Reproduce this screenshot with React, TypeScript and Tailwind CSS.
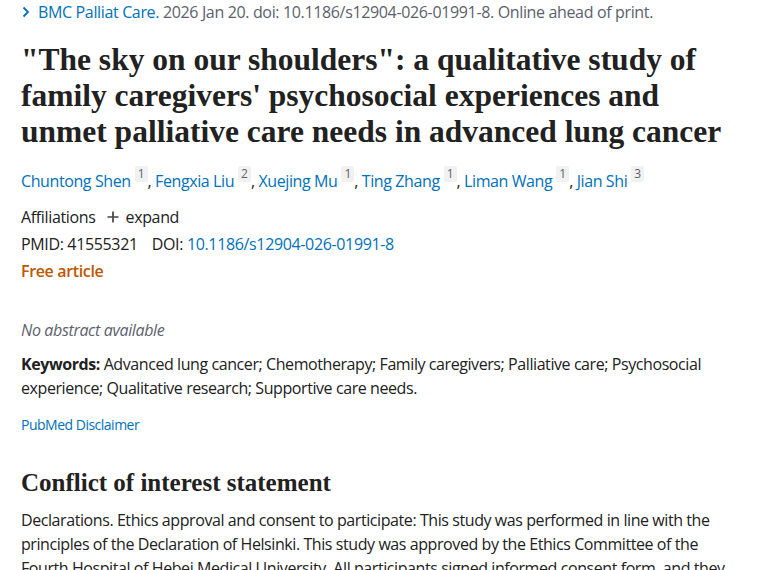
import React from 'react';

const authors = [
  { name: 'Chuntong Shen', aff: '1' },
  { name: 'Fengxia Liu', aff: '2' },
  { name: 'Xuejing Mu', aff: '1' },
  { name: 'Ting Zhang', aff: '1' },
  { name: 'Liman Wang', aff: '1' },
  { name: 'Jian Shi', aff: '3' },
];

const sans = "font-['Open_Sans',sans-serif]";
const serif = "font-['Liberation_Serif',serif]";

const App: React.FC = () => {
  return (
    <div className={`min-h-screen bg-white text-[#212121] ${sans} pl-[21px] pr-[20px] text-[16px]`}>
      {/* Citation */}
      <div className="flex items-center h-[24px] leading-[24px] text-[#5b616b] tracking-[-0.35px] whitespace-nowrap">
        <svg width="10" height="12" viewBox="0 0 10 12" className="mr-[7px] shrink-0">
          <path d="M2.5 1.5 L7 6 L2.5 10.5" fill="none" stroke="#0071bc" strokeWidth="1.8" />
        </svg>
        <a className="text-[#0071bc]">BMC Palliat Care.</a>
        <span>&nbsp;2026 Jan 20. doi: 10.1186/s12904-026-01991-8. Online ahead of print.</span>
      </div>

      {/* Title */}
      <h1 className={`${serif} mt-[18px] text-[31.5px] leading-[36px] font-bold text-[#212121]`}>
        "The sky on our shoulders": a qualitative study of family caregivers' psychosocial experiences and
        unmet palliative care needs in advanced lung cancer
      </h1>

      {/* Authors */}
      <div className="mt-[19px] h-[24px] leading-[24px] whitespace-nowrap tracking-[-0.4px]">
        {authors.map((a, i) => (
          <span key={a.name}>
            <a className="text-[#0071bc]">{a.name}</a>
            <sup className="ml-[4px] relative -top-[3px] inline-block bg-[#f1f1f1] rounded-[2px] px-[3px] text-[12px] leading-[16px] text-[#5b616b] align-top tracking-normal">
              {a.aff}
            </sup>
            {i < authors.length - 1 && <span>, </span>}
          </span>
        ))}
      </div>

      {/* Meta */}
      <div className="mt-[10px] tracking-[-0.35px]">
        <div className="flex items-center h-[27px]">
          <span>Affiliations</span>
          <svg width="12" height="12" viewBox="0 0 12 12" className="ml-[11px] mr-[7px]">
            <path d="M6 0.5 V11.5 M0.5 6 H11.5" stroke="#444" strokeWidth="1.7" />
          </svg>
          <span>expand</span>
        </div>
        <div className="flex items-center h-[27px] pt-[1px]">
          <span>PMID: 41555321</span>
          <span className="ml-[14px]">DOI:&nbsp;</span>
          <a className="text-[#0071bc]">10.1186/s12904-026-01991-8</a>
        </div>
        <div className="flex items-center h-[27px] text-[#c05600] font-semibold">Free article</div>
      </div>

      {/* Abstract */}
      <p className="mt-[34px] h-[24px] leading-[24px] italic text-[#5b616b] tracking-[-0.35px]">No abstract available</p>

      <p className="mt-[10px] leading-[24px] tracking-[-0.42px] max-w-[700px]">
        <strong className="font-bold">Keywords:</strong> Advanced lung cancer; Chemotherapy; Family caregivers; Palliative
        care; Psychosocial experience; Qualitative research; Supportive care needs.
      </p>

      <a className="block mt-[15px] text-[14px] leading-[20px] text-[#0071bc] tracking-[-0.5px]">PubMed Disclaimer</a>

      {/* Conflict of interest */}
      <h2 className={`${serif} mt-[32px] text-[25px] leading-[32px] font-bold`}>Conflict of interest statement</h2>

      <p className="mt-[9px] leading-[24px] tracking-[-0.42px] max-w-[705px]">
        Declarations. Ethics approval and consent to participate: This study was performed in line with the
        principles of the Declaration of Helsinki. This study was approved by the Ethics Committee of the
        Fourth Hospital of Hebei Medical University. All participants signed informed consent form, and they
        were informed of the purpose of the study and their right to withdraw at any time.
      </p>
    </div>
  );
};

export default App;
